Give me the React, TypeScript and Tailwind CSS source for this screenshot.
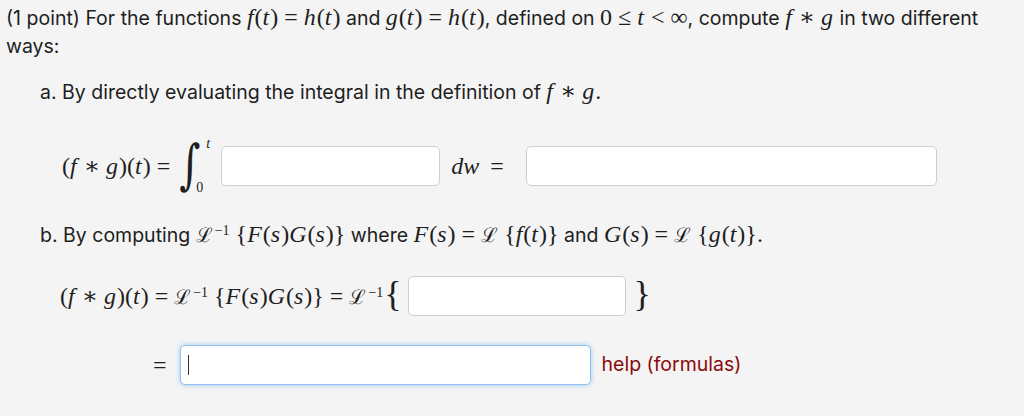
import React from 'react'

const I = ({ children }: { children: React.ReactNode }) => (
    <span className="italic mr-[1px]">{children}</span>
)

const M = ({ children, className = '' }: { children: React.ReactNode; className?: string }) => (
    <span className={`font-['Liberation_Serif','DejaVu_Serif',serif] text-[24px] ${className}`}>{children}</span>
)

const L = () => (
    <span className="font-['DejaVu_Serif',serif] text-[20px]">ℒ</span>
)

const Inv = () => (
    <>
        <L />
        <sup className="text-[14px] ml-[2px]">−1</sup>
    </>
)

const Box = ({ width, focused = false }: { width: string; focused?: boolean }) => (
    <div
        className={`h-[40px] ${width} bg-white rounded-[5px] border flex items-center ${
            focused
                ? 'border-[#8fc0f0] shadow-[0_0_5px_rgba(82,168,236,0.55)]'
                : 'border-[#cfcfcf]'
        }`}
    >
        {focused && <span className="ml-[7px] w-px h-[20px] bg-[#333]" />}
    </div>
)

export default function App() {
    return (
        <div className="min-h-[416px] bg-[#f4f4f4] pl-[6px] pr-[30px] pt-[3px] text-[19.5px] text-[#1e1e1e] font-['Inter','Liberation_Sans',sans-serif]">
            <p className="leading-[28px]">
                (1 point) For the functions{' '}
                <M>
                    <I>f</I>(<I>t</I>) = <I>h</I>(<I>t</I>)
                </M>{' '}
                and{' '}
                <M>
                    <I>g</I>(<I>t</I>) = <I>h</I>(<I>t</I>)
                </M>
                , defined on{' '}
                <M>
                    0 ≤ <I>t</I> &lt; ∞
                </M>
                , compute{' '}
                <M>
                    <I>f</I> ∗ <I>g</I>
                </M>{' '}
                in two different ways:
            </p>

            <div className="pl-[34px]">
                <p className="mt-[17px] leading-[28px]">
                    a. By directly evaluating the integral in the definition of{' '}
                    <M>
                        <I>f</I> ∗ <I>g</I>.
                    </M>
                </p>

                <div className="mt-[30px] h-[60px] flex items-center pl-[22px]">
                    <M>
                        (<I>f</I> ∗ <I>g</I>)(<I>t</I>) =
                    </M>
                    <div className="ml-[6px] flex items-center h-[60px]">
                        <span className="font-['DejaVu_Serif',serif] font-light text-[54px] leading-none -mt-[2px] scale-x-75">∫</span>
                        <div className="flex flex-col justify-between h-[58px] font-['Liberation_Serif',serif] text-[14px] leading-none">
                            <span className="italic ml-[2px]">t</span>
                            <span className="-ml-[8px]">0</span>
                        </div>
                    </div>
                    <div className="ml-[11px]">
                        <Box width="w-[219px]" />
                    </div>
                    <M className="ml-[11px]">
                        <I>dw</I>
                    </M>
                    <M className="ml-[10px]">=</M>
                    <div className="ml-[22px]">
                        <Box width="w-[411px]" />
                    </div>
                </div>

                <p className="mt-[24px] leading-[28px]">
                    b. By computing{' '}
                    <M>
                        <Inv /> {'{'}
                        <I>F</I>(<I>s</I>)<I>G</I>(<I>s</I>){'}'}
                    </M>{' '}
                    where{' '}
                    <M>
                        <I>F</I>(<I>s</I>) = <L /> {'{'}
                        <I>f</I>(<I>t</I>){'}'}
                    </M>{' '}
                    and{' '}
                    <M>
                        <I>G</I>(<I>s</I>) = <L /> {'{'}
                        <I>g</I>(<I>t</I>){'}'}.
                    </M>
                </p>

                <div className="mt-[27px] h-[40px] flex items-center pl-[20px]">
                    <M>
                        (<I>f</I> ∗ <I>g</I>)(<I>t</I>) = <Inv /> {'{'}
                        <I>F</I>(<I>s</I>)<I>G</I>(<I>s</I>){'}'} = <Inv />
                    </M>
                    <span className="font-['Liberation_Serif',serif] text-[36px] leading-none -mt-[4px] ml-[1px]">{'{'}</span>
                    <div className="ml-[6px]">
                        <Box width="w-[218px]" />
                    </div>
                    <span className="font-['Liberation_Serif',serif] text-[36px] leading-none -mt-[4px] ml-[8px]">{'}'}</span>
                </div>

                <div className="mt-[29px] h-[40px] flex items-center pl-[113px]">
                    <M>=</M>
                    <div className="ml-[13px]">
                        <Box width="w-[411px]" focused />
                    </div>
                    <span className="ml-[11px] text-[#8b0a0a]">help (formulas)</span>
                </div>
            </div>
        </div>
    )
}
